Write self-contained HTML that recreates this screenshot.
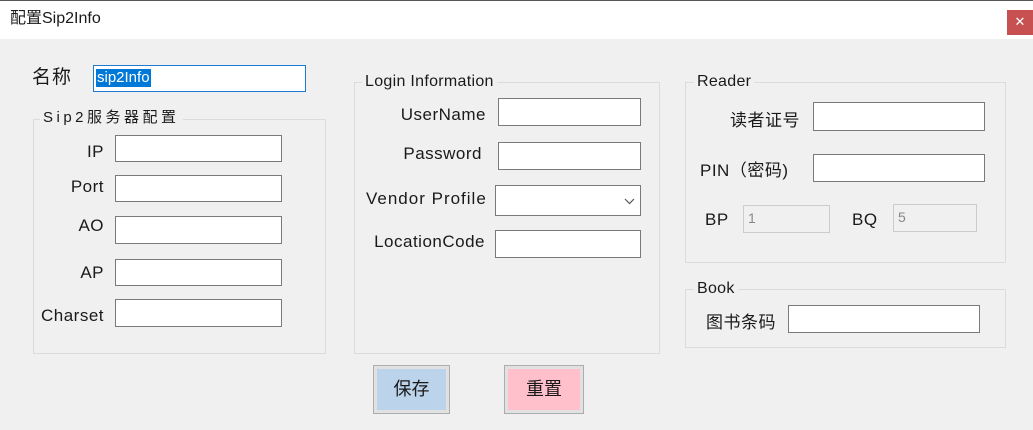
<!DOCTYPE html>
<html><head><meta charset="utf-8"><style>
*{box-sizing:border-box;margin:0;padding:0}
body{width:1033px;height:430px;background:#f0f0f0;position:relative;overflow:hidden;font-family:"Liberation Sans","Noto Sans CJK SC",sans-serif;color:#1a1a1a}
.a{position:absolute}
.t{position:absolute;font-size:17px;line-height:20px;white-space:nowrap;letter-spacing:0.5px}
.r{text-align:right;width:120px}
.in{position:absolute;background:#fff;border:1px solid #7a7a7a}
.dis{position:absolute;background:#f0f0f0;border:1px solid #ccc;font-size:14px;color:#888;padding:3px 4px;line-height:18px}
.g{position:absolute;border:1px solid #dcdcdc}
.gl{position:absolute;background:#f0f0f0;font-size:16px;line-height:18px;padding:0 3px;white-space:nowrap;letter-spacing:0.3px}
</style></head><body>
<div class="a" style="left:0;top:0;width:1033px;height:39px;background:#fff;border-top:1px solid #555"></div>
<div class="t" style="left:10px;top:9px;font-size:16px;letter-spacing:0">配置Sip2Info</div>
<div class="a" style="left:1007px;top:10px;width:26px;height:25px;background:#c75050;color:#fff;font-size:13px;text-align:center;line-height:24px">✕</div>

<div class="t" style="left:32px;top:67px;font-size:19px;line-height:22px;letter-spacing:1px">名称</div>
<div class="in" style="left:93px;top:65px;width:213px;height:27px;border-color:#1f7ad4"><span style="position:absolute;left:2px;top:3px;background:#0078d7;color:#fff;font-size:15px;line-height:18px;padding:0 1px">sip2Info</span></div>

<div class="g" style="left:33px;top:119px;width:293px;height:235px"></div>
<div class="gl" style="left:40px;top:109px;letter-spacing:3.5px;font-size:15px">Sip2服务器配置</div>
<div class="t r" style="left:-16px;top:142px">IP</div>
<div class="in" style="left:115px;top:135px;width:167px;height:27px"></div>
<div class="t r" style="left:-16px;top:177px">Port</div>
<div class="in" style="left:115px;top:175px;width:167px;height:27px"></div>
<div class="t r" style="left:-16px;top:216px">AO</div>
<div class="in" style="left:115px;top:216px;width:167px;height:28px"></div>
<div class="t r" style="left:-16px;top:263px">AP</div>
<div class="in" style="left:115px;top:259px;width:167px;height:27px"></div>
<div class="t r" style="left:-16px;top:306px">Charset</div>
<div class="in" style="left:115px;top:299px;width:167px;height:28px"></div>

<div class="g" style="left:354px;top:82px;width:306px;height:272px"></div>
<div class="gl" style="left:362px;top:73px">Login Information</div>
<div class="t r" style="left:366px;top:105px">UserName</div>
<div class="in" style="left:498px;top:98px;width:143px;height:28px"></div>
<div class="t r" style="left:362px;top:144px">Password</div>
<div class="in" style="left:498px;top:142px;width:143px;height:28px"></div>
<div class="t" style="left:366px;top:189px;letter-spacing:1px">Vendor Profile</div>
<div class="in" style="left:495px;top:185px;width:146px;height:31px"><svg class="a" style="left:128px;top:12px" width="11" height="7"><path d="M1 1L5.5 5.5L10 1" stroke="#555" fill="none" stroke-width="1.2"/></svg></div>
<div class="t r" style="left:365px;top:232px">LocationCode</div>
<div class="in" style="left:495px;top:230px;width:146px;height:28px"></div>

<div class="g" style="left:685px;top:82px;width:321px;height:181px"></div>
<div class="gl" style="left:694px;top:73px">Reader</div>
<div class="t" style="left:730px;top:111px">读者证号</div>
<div class="in" style="left:813px;top:102px;width:172px;height:29px"></div>
<div class="t" style="left:700px;top:161px">PIN（密码)</div>
<div class="in" style="left:813px;top:154px;width:172px;height:28px"></div>
<div class="t" style="left:705px;top:210px">BP</div>
<div class="dis" style="left:743px;top:205px;width:87px;height:28px">1</div>
<div class="t" style="left:852px;top:210px">BQ</div>
<div class="dis" style="left:893px;top:204px;width:84px;height:28px">5</div>

<div class="g" style="left:685px;top:289px;width:321px;height:59px"></div>
<div class="gl" style="left:694px;top:280px">Book</div>
<div class="t" style="left:706px;top:313px">图书条码</div>
<div class="in" style="left:788px;top:305px;width:192px;height:28px"></div>

<div class="a" style="left:373px;top:365px;width:77px;height:49px;background:#bcd3ec;border:1px solid #adadad;outline:3px solid #e1e1e1;outline-offset:-4px;font-size:18px;text-align:center;line-height:47px">保存</div>
<div class="a" style="left:504px;top:365px;width:80px;height:49px;background:#ffc0cb;border:1px solid #adadad;outline:3px solid #e1e1e1;outline-offset:-4px;font-size:18px;text-align:center;line-height:47px">重置</div>
</body></html>
